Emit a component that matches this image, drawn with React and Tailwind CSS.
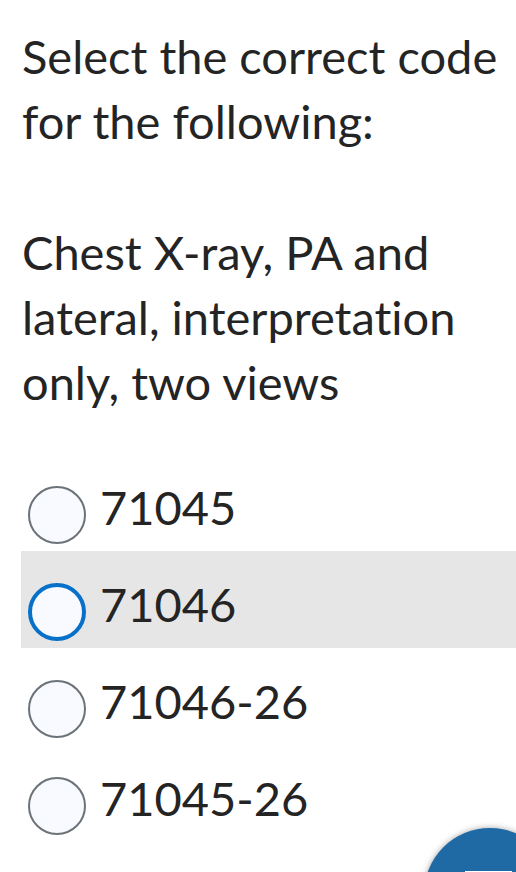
const options = ["71045", "71046", "71046-26", "71045-26"];

function Radio({ selected }) {
  return (
    <span
      className={`mt-[11px] block w-[58px] h-[58px] shrink-0 rounded-full bg-[#f8faff] ${
        selected ? "border-[4px] border-[#0770c8]" : "border-2 border-[#6c7378]"
      }`}
    />
  );
}

export default function App() {
  const selected = 1;

  return (
    <div className="relative min-h-[872px] overflow-hidden bg-white font-['Lato',sans-serif] text-[#242424] [font-variant-ligatures:none]">
      <div className="pl-[22px] pr-[12px] pt-[24px] text-[47px] leading-[65px]">
        <p>Select the correct code for the following:</p>
        <p className="mt-[66px]">
          Chest X-ray, PA and lateral, interpretation only, two views
        </p>
      </div>

      <div className="mt-[39px] pl-[21px]">
        {options.map((opt, i) => (
          <div
            key={opt}
            className={`flex h-[97px] items-start gap-[14px] pl-[7px] pt-[21px] ${
              i === selected ? "bg-[#e6e6e6]" : ""
            }`}
          >
            <Radio selected={i === selected} />
            <span className="text-[47px] leading-[65px]">{opt}</span>
          </div>
        ))}
      </div>

      <div className="absolute left-[424px] top-[828px] h-[132px] w-[132px] rounded-full bg-[#1f69a4] shadow-[0_0_6px_rgba(0,0,0,0.35)]">
        <div className="absolute left-[41px] top-[43px] h-[6px] w-[47px] bg-white" />
      </div>
    </div>
  );
}
